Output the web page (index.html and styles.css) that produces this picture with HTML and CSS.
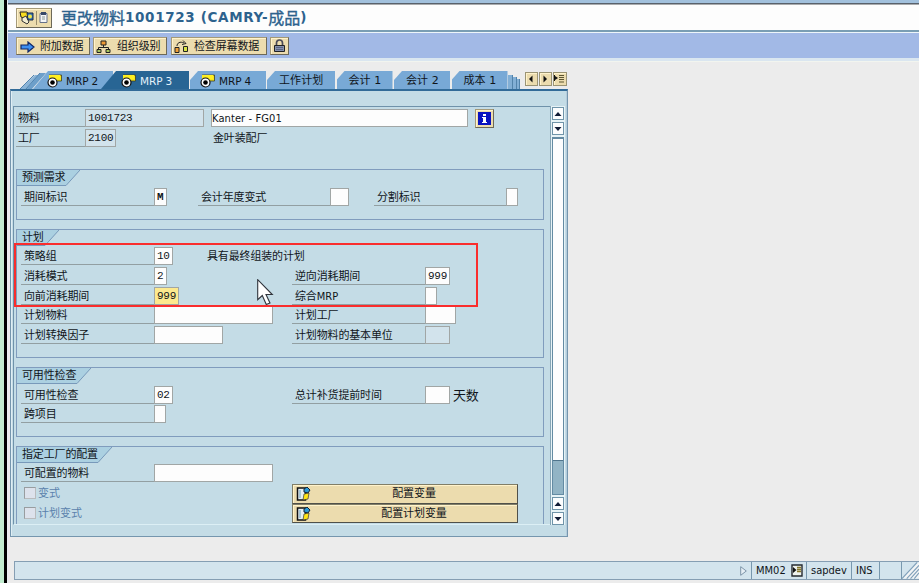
FILE: index.html
```
<!DOCTYPE html>
<html lang="zh-CN">
<head>
<meta charset="utf-8">
<title>更改物料</title>
<link rel="stylesheet" href="styles.css">
</head>
<body>
<svg class="defs" width="0" height="0">
  <symbol id="eye" viewBox="0 0 15 14"><path d="M2.500 1h12v6h-5z" fill="#f7e51c" stroke="#3b3e22" stroke-width=".8"/><path d="M2 1h11v4H2z" fill="#ffef22"/><circle cx="5.500" cy="8.500" r="4.500" fill="#fff" stroke="#111" stroke-width="1.200"/><circle cx="5.500" cy="8.500" r="2.300" fill="#000"/></symbol>
  <symbol id="edit" viewBox="0 0 15 14"><path d="M1.500 1h8v12h-8z" fill="#e6eff3" stroke="#111" stroke-width="1.500"/><path d="M3 3h2v8H3z" fill="#a9c8d8"/><path d="M8 2l3-2 3 3-2 3-4-1z" fill="#2b98d5" stroke="#123"/><path d="M8 7l5-1-1 6-5 1z" fill="#ffe414" stroke="#333" stroke-width=".7"/></symbol>
  <symbol id="up" viewBox="0 0 8 4"><path d="M4 0l3.500 4h-7z" fill="#111b35"/></symbol>
  <symbol id="down" viewBox="0 0 8 4"><path d="M.5 0h7L4 4z" fill="#111b35"/></symbol>
  <symbol id="slant" viewBox="0 0 14 16"><path d="M0 0h14L0 15.500z" fill="#abd0e1"/><path d="M14 0L0 15.500" stroke="#7899ba" fill="none"/></symbol>
</svg>
<div class="window">
  <div class="strip"></div>
  <header class="titlebar">
    <button class="btn titlebtn"><svg width="30" height="16" viewBox="0 0 30 16"><path d="M1 2h7l2 3-3 4-5-2z" fill="#f7dc20" stroke="#222"/><path d="M3 8l4-2 3 6-2 2-5-3z" fill="#f3eed2" stroke="#333"/><path d="M8 3h6v7H9z" fill="#3673b8" stroke="#182b48"/><circle cx="11" cy="6.500" r="2" fill="#efe548"/><path d="M17.500 1v14" stroke="#9b8f6c"/><path d="M21 3.500h7v9h-7z" fill="#f4f5f7" stroke="#64708a"/><path d="M22 2h5v3h-5z" fill="#364869"/><path d="M23 7h3M23 9h3" stroke="#899"/></svg></button>
    <h1>更改物料<b>1001723 (CAMRY-</b>成品<b>)</b></h1>
  </header>
  <div class="toolbar">
    <button class="btn b1"><svg width="15" height="12" viewBox="0 0 15 12"><path d="M1 4h7V1l6 5-6 5V8H1z" fill="#3d8ff0" stroke="#112765" stroke-width="1.200"/></svg>附加数据</button>
    <button class="btn b2"><svg width="15" height="14" viewBox="0 0 15 14"><path d="M7.500 4v4M2.500 10V7.500h10V10" fill="none" stroke="#222"/><path d="M5 1h5v4H5z" fill="#ef9a35" stroke="#222"/><path d="M1 9.500h4v3H1zM10 9.500h4v3h-4z" fill="#a9c65e" stroke="#222"/></svg>组织级别</button>
    <button class="btn b3"><svg width="15" height="14" viewBox="0 0 15 14"><path d="M3 6C3 3 6 1 10 3M9 .500l3 3-4 1" fill="none" stroke="#222"/><path d="M1 7.500h4v5H1z" fill="#efa038" stroke="#222"/><path d="M9.500 6.500h4v5h-4z" fill="#d8e344" stroke="#222"/></svg>检查屏幕数据</button>
    <button class="btn b4"><svg width="13" height="14" viewBox="0 0 13 14"><path d="M3.500 7V4a3 3 0 0 1 6 0v3" fill="none" stroke="#4b4b58" stroke-width="1.700"/><path d="M1.500 6.500h10v6h-10z" fill="#8490ae" stroke="#222"/><path d="M3 8.500h7M3 10.500h7" stroke="#5a6482"/></svg></button>
  </div>
  <div class="strip2"></div>

  <nav class="tabs">
    <svg class="stackl" width="26" height="18" viewBox="0 0 26 18"><path d="M0 18L15 4h9L10 18z" fill="#8ab3d6"/><path d="M7 18L20 2h6L12 18z" fill="#6d9fca"/><path d="M0 18L14 4M6 18L20 2" stroke="#4f83af"/></svg>
    <div class="tab wide t1"><svg width="15" height="14"><use href="#eye"/></svg>MRP 2</div>
    <div class="tab wide t2"><svg width="15" height="14"><use href="#eye"/></svg>MRP 3</div>
    <div class="tab t3"><svg width="15" height="14"><use href="#eye"/></svg>MRP 4</div>
    <div class="tab t4">工作计划</div>
    <div class="tab t5">会计 1</div>
    <div class="tab t6">会计 2</div>
    <div class="tab t7">成本 1</div>
    <svg class="stackr" width="12" height="18" viewBox="0 0 12 18"><path d="M0 4h4v14H0zM5 6h3v12H5zM9 8h3v10H9z" fill="#82afd5"/><path d="M4.500 4v14M8.500 6v14M11.500 8v12" stroke="#5283aa"/></svg>
    <button class="btn nb"><svg width="6" height="8" viewBox="0 0 6 8"><path d="M4.500 .5v7L1 4z" fill="#111"/></svg></button>
    <button class="btn nb"><svg width="6" height="8" viewBox="0 0 6 8"><path d="M1.500 .5v7L5 4z" fill="#111"/></svg></button>
    <button class="btn nb last"><svg width="11" height="10" viewBox="0 0 11 10"><path d="M0 1h1v6H0zM1 2l3 2-3 2z" fill="#111"/><path d="M5 1.500h5M5 3.500h5M5 5.500h5M5 8h5" stroke="#5d5631" stroke-width="1.200"/></svg></button>
  </nav>

  <main class="panel">
    <div class="content">
      <div class="row head"><label class="l69">物料</label><span class="f w119 off">1001723</span><span class="f w258 text">Kanter - FG01</span><button class="btn info"><svg width="13" height="13" viewBox="0 0 13 13"><path d="M0 0h13v13H0z" fill="#0a13c0"/><path d="M5 2h3v2H5zM4 5h4v5h1v1H4v-1h1V6H4z" fill="#fff"/></svg></button></div>
      <div class="row head"><label class="l69">工厂</label><span class="f w31 off">2100</span><span class="plain factory">金叶装配厂</span></div>

      <section class="group g1">
        <h2><span>预测需求</span><svg width="14" height="16"><use href="#slant"/></svg></h2>
        <div class="row"><label>期间标识</label><span class="f w13 bold">M</span><label class="at198">会计年度变式</label><span class="f w19"></span><label class="at374">分割标识</label><span class="f w12"></span></div>
      </section>

      <section class="group g2">
        <h2><span>计划</span><svg width="14" height="16"><use href="#slant"/></svg></h2>
        <div class="row"><label>策略组</label><span class="f w19">10</span><span class="plain strategy">具有最终组装的计划</span></div>
        <div class="row"><label>消耗模式</label><span class="cell"><span class="f w13">2</span></span><label>逆向消耗期间</label><span class="f w25">999</span></div>
        <div class="row"><label>向前消耗期间</label><span class="cell"><span class="f w25 focus">999</span></span><label>综合<span class="latin">MRP</span></label><span class="f w12"></span></div>
        <div class="row"><label>计划物料</label><span class="cell"><span class="f w119"></span></span><label>计划工厂</label><span class="f w31"></span></div>
        <div class="row"><label>计划转换因子</label><span class="cell"><span class="f w69"></span></span><label>计划物料的基本单位</label><span class="f w25 off"></span></div>
      </section>

      <section class="group g3">
        <h2><span>可用性检查</span><svg width="14" height="16"><use href="#slant"/></svg></h2>
        <div class="row"><label>可用性检查</label><span class="cell"><span class="f w19">02</span></span><label>总计补货提前时间</label><span class="f w25"></span><span class="plain days">天数</span></div>
        <div class="row"><label>跨项目</label><span class="f w12"></span></div>
      </section>

      <section class="group g4">
        <h2><span>指定工厂的配置</span><svg width="14" height="16"><use href="#slant"/></svg></h2>
        <div class="row"><label>可配置的物料</label><span class="f w119"></span></div>
        <div class="row check"><i></i><em>变式</em><button class="btn action"><svg width="15" height="14"><use href="#edit"/></svg><span>配置变量</span></button></div>
        <div class="row check"><i></i><em>计划变式</em><button class="btn action"><svg width="15" height="14"><use href="#edit"/></svg><span>配置计划变量</span></button></div>
      </section>
    </div>
    <div class="scroll">
      <span class="sb"><svg width="8" height="4"><use href="#up"/></svg></span>
      <span class="sb"><svg width="8" height="4"><use href="#down"/></svg></span>
      <span class="track"><span class="thumb"></span></span>
      <span class="sb"><svg width="8" height="4"><use href="#up"/></svg></span>
      <span class="sb"><svg width="8" height="4"><use href="#down"/></svg></span>
    </div>
    <svg class="cursor" width="18" height="26" viewBox="0 0 18 26"><path d="M.7.700v20l4.600-4.200 4 9 3.700-1.500-4-8.500h6.300z" fill="#fff" stroke="#30343c" stroke-width="1.100"/></svg>
    <div class="highlight"></div>
  </main>

  <footer class="status">
    <svg class="tri" width="7" height="10" viewBox="0 0 7 10"><path d="M.7.700v8.600L6.300 5z" fill="#e5eef4" stroke="#7d94a8"/></svg>
    <span class="s s1">MM02<svg width="12" height="13" viewBox="0 0 12 13"><path d="M1 1h10v11H1z" fill="#eef2ee" stroke="#252a2f" stroke-width="1.400"/><path d="M2 3l3.500 3L2 9z" fill="#111"/><path d="M6 3.500h4M6 5.500h4M6 7.500h4" stroke="#86772b" stroke-width="1.300"/></svg></span>
    <span class="s s2">sapdev</span>
    <span class="s s3">INS</span>
    <span class="s s4"></span>
    <span class="s s5"><svg width="17" height="17" viewBox="0 0 18 17"><path d="M0 17L17 0h1v17z" fill="#f2f4f5"/><path d="M0 17L16 0M5 17L18 3M9 17l9-10M13 17l5-6" stroke="#7e9fb9" stroke-width="1.200"/></svg></span>
  </footer>
</div>
</body>
</html>
```
FILE: styles.css
```
* { box-sizing: border-box; }
body { margin: 0; width: 919px; height: 583px; overflow: hidden; background: linear-gradient(90deg, #c2edd0 4px, #000 4px, #000 7px, #ececec 7px); color: #10151a; font: 11px/14px "DejaVu Sans Condensed", "Noto Sans CJK SC", sans-serif; }
svg { display: block; flex: none; }
.defs { position: absolute; }
.window { display: flex; flex-direction: column; height: 583px; margin-left: 7px; border-left: 1px solid #e8eef2; }
.strip { height: 5px; background: linear-gradient(#a2c1dd 3px, #59616b 3px, #59616b 4px, #a9abad 4px); }
.titlebar { display: flex; align-items: center; height: 28px; padding-left: 8px; background: #fdfdfd; border-bottom: 1px solid #eef6fa; box-shadow: inset 0 -2px #7a9eb4; }
.btn { display: flex; align-items: center; justify-content: center; padding: 0; margin: 0; color: #10151a; font: inherit; background: #ecdcae; border: 1px solid; border-color: #a59a78 #6c6858 #6c6858 #a59a78; box-shadow: inset 1px 1px #fff3cc; }
.titlebtn { width: 36px; height: 20px; margin-top: -2px; }
h1 { display: flex; align-items: center; margin: -3px 0 0 9px; font: 16px/24px "Noto Sans CJK SC", sans-serif; color: #2d628d; -webkit-text-stroke: .35px #2d628d; white-space: pre; }
h1 b { font: bold 13.500px/24px "DejaVu Sans", sans-serif; letter-spacing: .65px; -webkit-text-stroke: 0; }
.toolbar { display: flex; align-items: center; height: 25px; padding-left: 8px; background: #a2b9e6; }
.toolbar .btn { height: 18px; margin-right: 4px; margin-top: 1px; justify-content: flex-start; padding-left: 3px; gap: 5px; letter-spacing: -.15px; line-height: 16px; }
.b1 { width: 74px; }
.b2 { width: 74px; }
.b3 { width: 96px; }
.toolbar .b1 { padding-top: 1px; }
.toolbar .b2, .toolbar .b3 { padding: 1px 0 0 2px; }
.toolbar .b2 { margin-left: -1px; gap: 6px; }
.toolbar .b4 { width: 19px; margin-left: -1px; padding-left: 2px; }
.strip2 { height: 4px; background: linear-gradient(#dae6f0 3px, #f2f5ef 3px); }

.tabs { display: flex; align-items: flex-end; height: 27px; padding-left: 12px; font-size: 11px; }
.stackl { margin-right: -13px; }
.tab { display: flex; align-items: center; height: 18px; background: #78a9d6; clip-path: polygon(0 100%, 0 9px, 8px 0, 100% 0, 100% 100%); padding-left: 12px; padding-top: 1px; letter-spacing: .1px; white-space: pre; }
.tab svg { margin-right: 4px; }
.wide { clip-path: polygon(0 100%, 15px 0, 100% 0, 100% 100%); }
.t1 { width: 80px; padding-left: 14px; }
.t2 { width: 88px; margin-left: -12px; padding-left: 20px; background: #286594; color: #e4f1fa; }
.t3 { width: 76px; margin-left: 1px; padding-left: 10px; }
.t1, .t2, .t3 { font-family: "DejaVu Sans", sans-serif; font-size: 10.500px; letter-spacing: -.1px; }
.t4 { width: 68px; margin-left: 1px; }
.t5, .t6, .t7 { width: 56px; margin-left: 1.500px; padding-left: 12px; font-family: "DejaVu Sans", "Noto Sans CJK SC", sans-serif; }
.stackr { margin-right: 5px; }
.nb { width: 13px; height: 14px; margin: 0 1px 3px 0; border-color: #9b9474; }
.nb.last { width: 14px; }

.panel { position: relative; display: flex; width: 558px; height: 448px; margin-left: 2px; padding: 15px 2px 10px; background: #c4dce6; border: 1px solid #7596ae; border-top: 2px solid #326b98; box-shadow: inset -1px 0 #b4ccdc, inset 1px 0 #dfeef4; }
.content { width: 539px; height: 419px; padding: 2px 0 0 2px; border-left: 1px solid #6f92aa; border-top: 1px solid #6f92aa; border-bottom: 1px solid #dceff5; }
.row { display: flex; height: 19.750px; padding: 0 0 0 5px; }
.row > * { flex: none; }
.row label { width: 133px; height: 18px; padding: 3px 0 0 3px; border-bottom: 1px solid #929fa2; line-height: 13px; white-space: nowrap; letter-spacing: -.15px; }
.row.head { padding-left: 0; }
.row .l69 { width: 69px; padding-left: 2px; }
.f { height: 18px; padding: 0 0 0 2px; background: #fdfdfd; border: 1px solid #a1a6a5; font: 11px/16px "Liberation Mono", monospace; letter-spacing: -.25px; white-space: pre; overflow: hidden; }
.f.off { background: #d2e3ec; }
.f.focus { background: #fde98e; }
.f.bold { font-weight: bold; }
.f.text { margin-left: 7px; padding-left: 0; font: 11px/17px "DejaVu Sans Condensed", sans-serif; letter-spacing: .1px; }
.w12 { width: 12px; } .w13 { width: 13px; } .w19 { width: 19px; } .w25 { width: 25px; } .w31 { width: 31px; } .w69 { width: 69px; } .w119 { width: 119px; } .w258 { width: 257px; }
.info { width: 19px; height: 19px; margin-left: 7px; }
.latin { letter-spacing: .1px; }
.plain { padding-top: 3px; line-height: 13px; white-space: nowrap; letter-spacing: -.15px; }
.factory { margin-left: 97px; }
.strategy { margin-left: 34px; }
.days { margin-left: 3px; font-size: 13px; }
.cell { display: flex; width: 138px; }
.row .at198 { margin-left: 31px; width: 132px; }
.row .at374 { margin-left: 25px; width: 132px; }
.group { width: 528px; border: 1px solid #809cbd; }
.group h2 { display: flex; height: 16px; margin: 0; font: inherit; }
.group h2 span { padding: 1px 0 0 5px; border-bottom: 1px solid #7899ba; background: #abd0e1; letter-spacing: -.15px; }
.group .row { padding-left: 4px; }
.g1 { height: 51px; margin-top: 20px; }
.g2 { height: 129px; margin-top: 9px; }
.g3 { height: 70px; margin-top: 9px; }
.g4 { height: 78px; margin-top: 9px; border-bottom: 0; }
.g1 h2 { margin-bottom: 2px; }
.g2 h2 { margin-bottom: 1.500px; }
.g3 h2 { margin-bottom: 2px; }
.g4 h2 { margin-bottom: 1.750px; }
.g1 h2 span { width: 49px; }
.g2 h2 span { width: 28px; }
.g3 h2 span { width: 60px; }
.g4 h2 span { width: 81px; }
.check i { width: 12px; height: 12px; margin: 3px 2px 0 3px; background: #dde2ec; border: 1px solid; border-color: #989da0 #b9bbbd #b9bbbd #989da0; }
.check em { width: 254px; padding-top: 3px; color: #5b82ad; font-style: normal; }
.action { position: relative; width: 226px; height: 19.500px; padding: 0 5px 0 3px; border-color: #817e67 #4f504a #4f504a #817e67; }
.action span { flex: 1; padding: 1px 0 0 5px; letter-spacing: -.1px; }

.scroll { display: flex; flex-direction: column; gap: 2px; width: 15px; height: 419px; padding: 1px 1px 0; border-left: 1px solid #86a5b6; background: #e6f2f6; }
.sb { display: flex; align-items: center; justify-content: center; height: 13px; background: #fcfdfe; border: 1px solid #6f94a9; }
.track { display: flex; flex: 1; align-items: flex-end; background: #fdfdfe; border: 1px solid #648ba3; border-top-width: 2px; }
.thumb { width: 100%; height: 34px; background: #92b4c5; border-top: 1px solid #50758c; }
.cursor { position: absolute; left: 246px; top: 188px; }
.highlight { position: absolute; left: 3px; top: 152px; width: 464px; height: 64px; border: 2px solid #fa2d2d; }

.status { display: flex; align-items: center; justify-content: flex-end; height: 19px; margin: 24px 0 0 6px; background: #d3e4ed; border: solid #859eb3; border-width: 1px 0 1px 1px; }
.tri { margin-right: 4px; }
.s { display: flex; align-items: center; height: 17px; padding-left: 4px; border-left: 1px solid #7898ae; }
.s1 { width: 55px; gap: 5px; }
.s2 { width: 45px; }
.s3 { width: 28px; }
.s4 { width: 22px; }
.s5 { width: 18px; padding: 0; }
```
